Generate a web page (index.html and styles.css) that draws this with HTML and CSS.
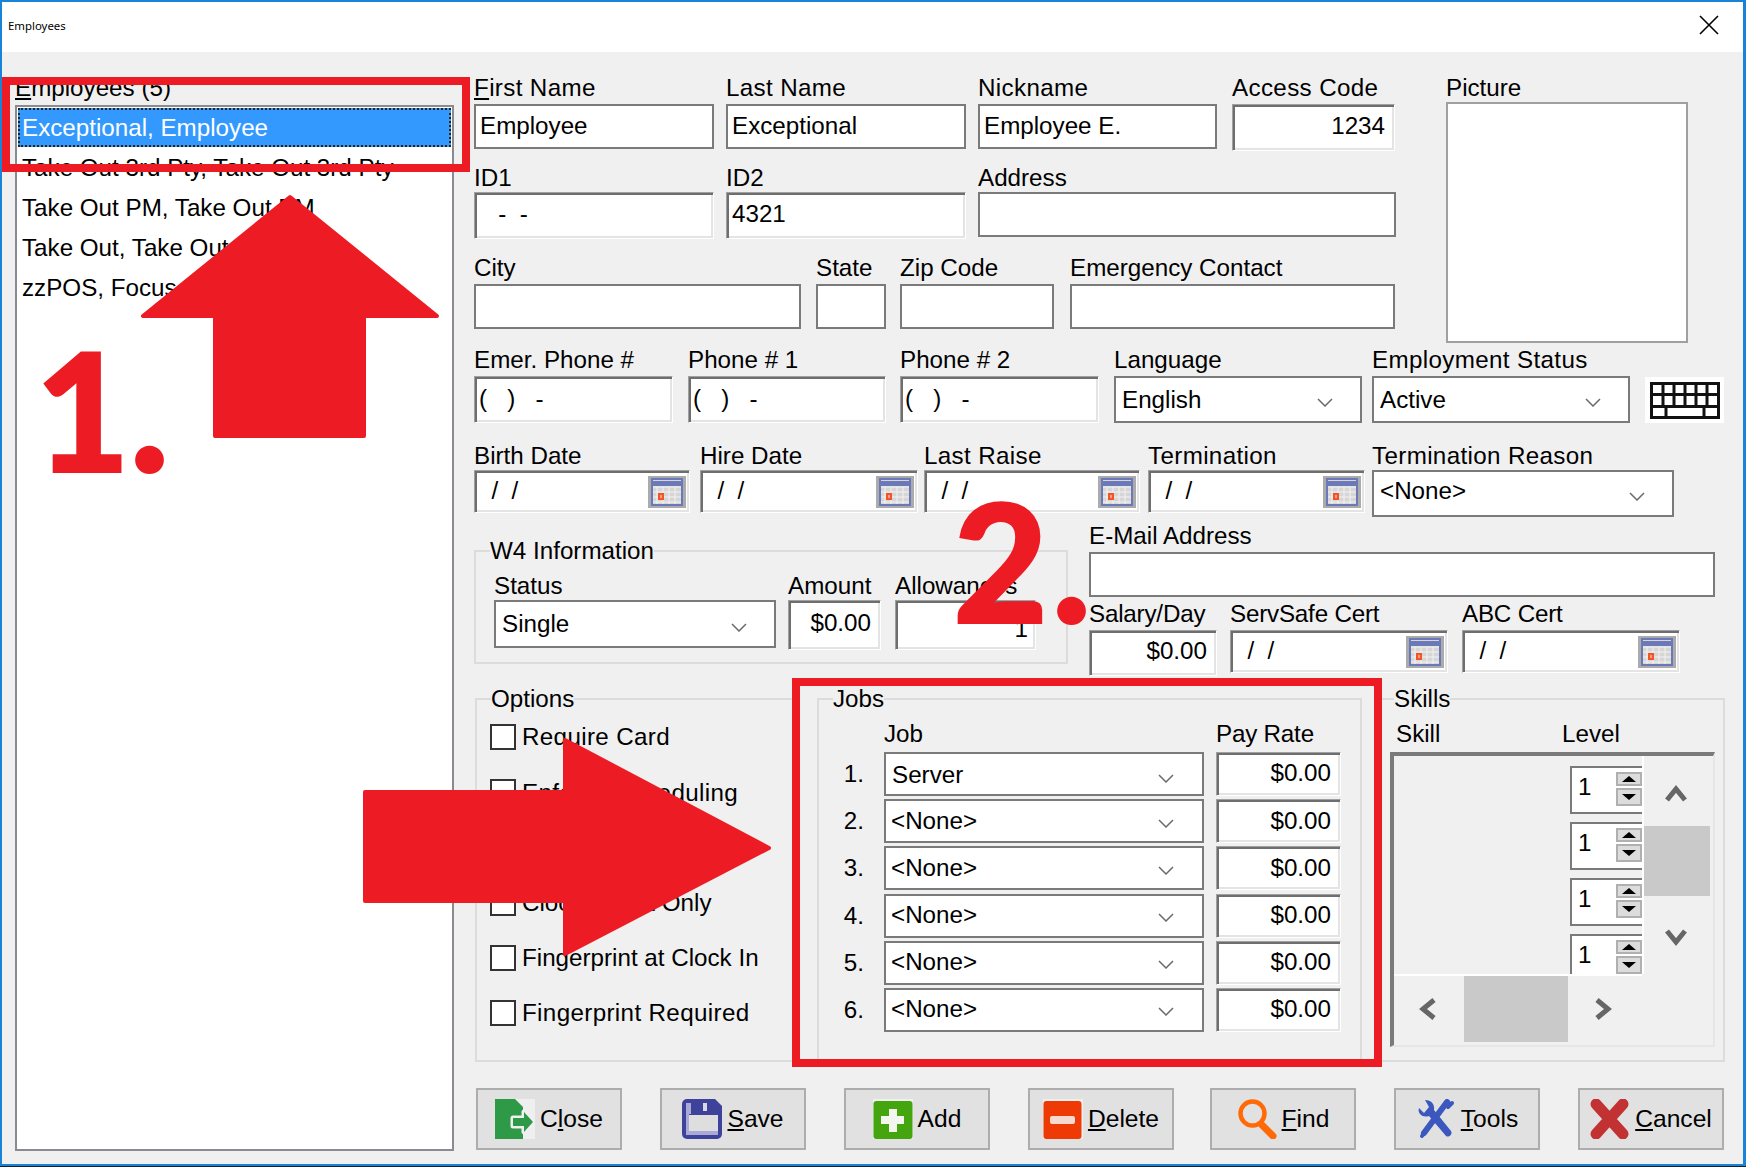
FILE: index.html
```html
<!DOCTYPE html>
<html lang="en">
<head>
<meta charset="utf-8">
<title>Employees</title>
<link rel="stylesheet" href="styles.css">
</head>
<body>
<svg class="defs" width="0" height="0" aria-hidden="true">
  <symbol id="chev" viewBox="0 0 16 9"><path d="M1 1l7 7 7-7" fill="none" stroke="#6a6a6a" stroke-width="1.5"/></symbol>
  <symbol id="cal" viewBox="0 0 38 32">
    <rect width="38" height="32" fill="#ababab"/>
    <rect x="3" y="3" width="32" height="26" fill="#d6d6d6"/>
    <path d="M3 11h32M3 16h32M3 21h32M3 26h32M9 11v18M15 11v18M21 11v18M27 11v18" stroke="#f2f2f2" stroke-width="1"/>
    <rect x="3" y="5" width="32" height="5" fill="#6b79b8"/>
    <rect x="4" y="3" width="30" height="26" fill="none" stroke="#6b79b8" stroke-width="2"/>
    <rect x="10" y="17" width="6" height="7" fill="#f0552a"/>
    <rect x="12" y="19" width="2" height="3" fill="#f8a080"/>
  </symbol>
</svg>

<div class="window">
  <header class="titlebar">
    <span class="title">Employees</span>
    <svg class="close-x" viewBox="0 0 20 20"><path d="M1 1l18 18M19 1L1 19" stroke="#000" stroke-width="1.6" fill="none"/></svg>
  </header>

  <div class="content">
    <aside class="left">
      <div class="list-label"><u>E</u>mployees (5)</div>
      <ul class="list">
        <li class="item selected">Exceptional, Employee</li>
        <li class="item">Take Out 3rd Pty, Take Out 3rd Pty</li>
        <li class="item">Take Out PM, Take Out PM</li>
        <li class="item">Take Out, Take Out</li>
        <li class="item">zzPOS, Focus</li>
      </ul>
    </aside>

    <main class="right">
      <div class="top-block">
        <div class="top-fields">
          <div class="row">
            <div class="field w240"><label class="lbl wide"><u>F</u>irst Name</label><div class="ctl flat h45">Employee</div></div>
            <div class="field w240 ml12"><label class="lbl wide">Last Name</label><div class="ctl flat h45">Exceptional</div></div>
            <div class="field w239 ml12"><label class="lbl wide">Nickname</label><div class="ctl flat h45">Employee E.</div></div>
            <div class="field w163 ml15"><label class="lbl wide">Access Code</label><div class="ctl sunken h47 num">1234</div></div>
          </div>
          <div class="row r2">
            <div class="field w240"><label class="lbl low">ID1</label><div class="ctl sunken h47 masked">   -  -</div></div>
            <div class="field w240 ml12"><label class="lbl low">ID2</label><div class="ctl sunken h47">4321</div></div>
            <div class="field w418 ml12"><label class="lbl low">Address</label><div class="ctl flat h45"></div></div>
          </div>
          <div class="row r3">
            <div class="field w327"><label class="lbl">City</label><div class="ctl flat h45"></div></div>
            <div class="field w70 ml15"><label class="lbl">State</label><div class="ctl flat h45"></div></div>
            <div class="field w154 ml14"><label class="lbl">Zip Code</label><div class="ctl flat h45"></div></div>
            <div class="field w325 ml16"><label class="lbl">Emergency Contact</label><div class="ctl flat h45"></div></div>
          </div>
        </div>
        <div class="field picture-col"><label class="lbl pic-lbl">Picture</label><div class="picture"></div></div>
      </div>

      <div class="row r4">
        <div class="field w199"><label class="lbl">Emer. Phone #</label><div class="ctl sunken h47 masked ph">(   )   -</div></div>
        <div class="field w198 ml15"><label class="lbl">Phone # 1</label><div class="ctl sunken h47 masked ph">(   )   -</div></div>
        <div class="field w199 ml14"><label class="lbl">Phone # 2</label><div class="ctl sunken h47 masked ph">(   )   -</div></div>
        <div class="field w248 ml15"><label class="lbl">Language</label><div class="ctl sel h47"><span>English</span><svg class="chev"><use href="#chev"/></svg></div></div>
        <div class="field w258 ml10"><label class="lbl wide">Employment Status</label><div class="ctl sel h47"><span>Active</span><svg class="chev"><use href="#chev"/></svg></div></div>
        <div class="field w79 ml15 kb-field">
          <div class="kb">
            <svg viewBox="0 0 70 37" class="kb-icon"><path d="M1.5 1.5h67v34h-67zM1.5 12.5h67M1.5 24.5h67M13 1.5v23M24 1.5v23M35 1.5v23M46 1.5v23M57 1.5v23M16 24.5v11M54 24.5v11" fill="none" stroke="#111" stroke-width="3"/></svg>
          </div>
        </div>
      </div>

      <div class="row r5">
        <div class="field w216"><label class="lbl low">Birth Date</label><div class="ctl sunken h43 date"><span class="masked">  /  /</span><svg class="cal"><use href="#cal"/></svg></div></div>
        <div class="field w218 ml10"><label class="lbl low">Hire Date</label><div class="ctl sunken h43 date"><span class="masked">  /  /</span><svg class="cal"><use href="#cal"/></svg></div></div>
        <div class="field w216 ml6"><label class="lbl low wide">Last Raise</label><div class="ctl sunken h43 date"><span class="masked">  /  /</span><svg class="cal"><use href="#cal"/></svg></div></div>
        <div class="field w217 ml8"><label class="lbl low wide">Termination</label><div class="ctl sunken h43 date"><span class="masked">  /  /</span><svg class="cal"><use href="#cal"/></svg></div></div>
        <div class="field w302 ml7"><label class="lbl low wide">Termination Reason</label><div class="ctl sel h47 raise"><span>&lt;None&gt;</span><svg class="chev drop"><use href="#chev"/></svg></div></div>
      </div>

      <div class="mid-block">
        <fieldset class="group w4">
          <legend>W4 Information</legend>
          <div class="row w4-row">
            <div class="field w282"><label class="lbl low">Status</label><div class="ctl sel h48"><span>Single</span><svg class="chev"><use href="#chev"/></svg></div></div>
            <div class="field w93 ml12"><label class="lbl low">Amount</label><div class="ctl sunken h50 num">$0.00</div></div>
            <div class="field w141 ml14"><label class="lbl low">Allowances</label><div class="ctl sunken h50 num allow">1</div></div>
          </div>
        </fieldset>
        <div class="mid-right">
          <div class="field"><label class="lbl">E-Mail Address</label><div class="ctl flat h45"></div></div>
          <div class="row salary-row">
            <div class="field w128"><label class="lbl tight">Salary/Day</label><div class="ctl sunken h46 num">$0.00</div></div>
            <div class="field w218 ml13"><label class="lbl tight">ServSafe Cert</label><div class="ctl sunken h43 date"><span class="masked">  /  /</span><svg class="cal"><use href="#cal"/></svg></div></div>
            <div class="field w218 ml14"><label class="lbl tight">ABC Cert</label><div class="ctl sunken h43 date"><span class="masked">  /  /</span><svg class="cal"><use href="#cal"/></svg></div></div>
          </div>
        </div>
      </div>

      <div class="lower-block">
        <fieldset class="group options">
          <legend>Options</legend>
          <div class="option-list">
            <div class="option wide"><span class="check"></span><span>Require Card</span></div>
            <div class="option wide"><span class="check"></span><span>Enforce Scheduling</span></div>
            <div class="option"><span class="check"></span></div>
            <div class="option"><span class="check"></span><span>Clock In/Out Only</span></div>
            <div class="option"><span class="check"></span><span>Fingerprint at Clock In</span></div>
            <div class="option wide"><span class="check"></span><span>Fingerprint Required</span></div>
          </div>
        </fieldset>

        <fieldset class="group jobs">
          <legend>Jobs</legend>
          <div class="jobs-head"><span class="lbl low job-h">Job</span><span class="lbl low tight">Pay Rate</span></div>
          <div class="jobs-grid">
            <span class="job-num">1.</span><div class="ctl sel job-sel job-first"><span>Server</span><svg class="chev"><use href="#chev"/></svg></div><div class="ctl sunken num job-pay">$0.00</div>
            <span class="job-num">2.</span><div class="ctl sel job-sel"><span>&lt;None&gt;</span><svg class="chev"><use href="#chev"/></svg></div><div class="ctl sunken num job-pay">$0.00</div>
            <span class="job-num">3.</span><div class="ctl sel job-sel"><span>&lt;None&gt;</span><svg class="chev"><use href="#chev"/></svg></div><div class="ctl sunken num job-pay">$0.00</div>
            <span class="job-num">4.</span><div class="ctl sel job-sel"><span>&lt;None&gt;</span><svg class="chev"><use href="#chev"/></svg></div><div class="ctl sunken num job-pay">$0.00</div>
            <span class="job-num">5.</span><div class="ctl sel job-sel"><span>&lt;None&gt;</span><svg class="chev"><use href="#chev"/></svg></div><div class="ctl sunken num job-pay">$0.00</div>
            <span class="job-num">6.</span><div class="ctl sel job-sel"><span>&lt;None&gt;</span><svg class="chev"><use href="#chev"/></svg></div><div class="ctl sunken num job-pay">$0.00</div>
          </div>
        </fieldset>

        <fieldset class="group skills">
          <legend>Skills</legend>
          <div class="skills-head"><span class="lbl low skill-h">Skill</span><span class="lbl low level-h">Level</span></div>
          <div class="skills-panel">
            <div class="spin-area">
              <div class="spin"><span>1</span><div class="spin-btns"><i class="up"></i><i class="down"></i></div></div>
              <div class="spin"><span>1</span><div class="spin-btns"><i class="up"></i><i class="down"></i></div></div>
              <div class="spin"><span>1</span><div class="spin-btns"><i class="up"></i><i class="down"></i></div></div>
              <div class="spin"><span>1</span><div class="spin-btns"><i class="up"></i><i class="down"></i></div></div>
            </div>
            <div class="vbar">
              <div class="vbar-end"><svg class="sb-v" viewBox="0 0 22 17"><path d="M2 15L11 4l9 11" fill="none" stroke="#666" stroke-width="5"/></svg></div>
              <div class="vbar-thumb"></div>
              <div class="vbar-end low-end"><svg class="sb-v" viewBox="0 0 22 17"><path d="M2 2l9 11 9-11" fill="none" stroke="#666" stroke-width="5"/></svg></div>
            </div>
            <div class="hbar">
              <div class="hbar-end"><svg class="sb-h" viewBox="0 0 17 22"><path d="M15 2L4 11l11 9" fill="none" stroke="#666" stroke-width="5"/></svg></div>
              <div class="hbar-thumb"></div>
              <div class="hbar-end"><svg class="sb-h" viewBox="0 0 17 22"><path d="M2 2l11 9-11 9" fill="none" stroke="#666" stroke-width="5"/></svg></div>
            </div>
            <div class="corner"></div>
          </div>
        </fieldset>
      </div>

      <div class="buttons">
        <button class="btn"><svg class="ico" viewBox="0 0 40 40"><rect width="40" height="40" fill="#efefef"/><path d="M0 0H20L28 8V40H0Z" fill="#2e9a48"/><path d="M18 19H29V13L38 23 29 33V27H18Z" fill="#2e9a48" stroke="#f0f0f0" stroke-width="5" stroke-linejoin="round" paint-order="stroke"/></svg><span>C<u>l</u>ose</span></button>
        <button class="btn"><svg class="ico" viewBox="0 0 40 40"><path d="M5 0H33L40 7V35A5 5 0 0 1 35 40H5A5 5 0 0 1 0 35V5A5 5 0 0 1 5 0Z" fill="#3f429a"/><path d="M4 16H36V35A1 1 0 0 1 35 36H5A1 1 0 0 1 4 35Z" fill="#dedede"/><path d="M4 4H9V15H4ZM5 32H36V36H5Z" fill="#a9aad6"/><rect x="4" y="14" width="3" height="22" fill="#a9aad6"/><rect x="21" y="4" width="4" height="8" fill="#d8d8e8"/></svg><span><u>S</u>ave</span></button>
        <button class="btn"><svg class="ico" viewBox="0 0 40 40"><rect width="40" height="40" fill="#efefef"/><rect x="0.5" y="2" width="39" height="38" rx="3" fill="#45a50e"/><path d="M16 10H24V17H31V25H24V33H16V25H8V17H16Z" fill="#f2f6ee"/></svg><span>Add</span></button>
        <button class="btn"><svg class="ico" viewBox="0 0 40 40"><rect width="40" height="40" fill="#efefef"/><rect x="0.5" y="2" width="38" height="38" rx="3" fill="#ee3b05"/><rect x="7" y="17" width="25" height="8" rx="2" fill="#f6d9cf"/></svg><span><u>D</u>elete</span></button>
        <button class="btn btn-find"><svg class="ico" viewBox="0 0 40 40"><circle cx="15.5" cy="14.5" r="12" fill="none" stroke="#ff6a06" stroke-width="4.5"/><path d="M25 26L36 37" stroke="#ff6a06" stroke-width="7" stroke-linecap="round"/></svg><span><u>F</u>ind</span></button>
        <button class="btn"><svg class="ico" viewBox="0 0 40 40"><path d="M31 3L8 34" stroke="#3c58be" stroke-width="6" stroke-linecap="round"/><path d="M36 4l-4 4M6 37l2-3" stroke="#3c58be" stroke-width="4" stroke-linecap="round"/><path d="M3 9L8 14l5-6L9 1C15 1 19 5 18 11L35 32C37 35 33 39 30 37L13 17C7 19 1 15 3 9Z" fill="#3c58be"/></svg><span><u>T</u>ools</span></button>
        <button class="btn"><svg class="ico" viewBox="0 0 40 40"><path d="M6 5L33 35M33 5L6 35" stroke="#c33232" stroke-width="11" stroke-linecap="round"/></svg><span><u>C</u>ancel</span></button>
      </div>
    </main>
  </div>
</div>

<div class="mark mark-list"></div>
<div class="mark mark-jobs"></div>
<svg class="arrows" viewBox="0 0 1746 1167" width="1746" height="1167" aria-hidden="true">
  <path d="M290 197L143 316H215V436H364V316H437Z" fill="#ed1c24" stroke="#ed1c24" stroke-width="4" stroke-linejoin="round"/>
  <path d="M365 792H565V740L769 848 565 954V901H365Z" fill="#ed1c24" stroke="#ed1c24" stroke-width="4" stroke-linejoin="round"/>
</svg>
<div class="step step-1">1.</div>
<div class="step step-2">2.</div>
</body>
</html>
```

FILE: styles.css
```css
* { box-sizing: border-box; }
html, body { margin: 0; padding: 0; background: #10202e; }
body { width: 1746px; height: 1167px; overflow: hidden; font: 24.2px/1.2 "Liberation Sans", Arial, sans-serif; color: #000; }
.defs { position: absolute; }

.window { width: 1746px; height: 1166px; background: #f0f0f0; border: solid #1883d7; border-width: 2px 3px 2px 2px; display: flex; flex-direction: column; }
.titlebar { height: 50px; background: #fff; display: flex; align-items: center; justify-content: space-between; padding: 0 24px 4px 6px; flex: none; }
.title { font: 11.4px "Noto Sans", sans-serif; }
.close-x { width: 20px; height: 20px; }

.content { flex: 1; display: flex; padding-top: 22px; min-height: 0; }

.left { width: 472px; padding-left: 13px; flex: none; }
.list-label { height: 31px; line-height: 28px; }
.list { list-style: none; margin: 0; padding: 1px; width: 439px; height: 1046px; background: #fff; border: 2px solid #8a8a93; }
.item { height: 40px; line-height: 40px; padding-left: 4px; white-space: nowrap; }
.item.selected { height: 39px; margin-bottom: 1px; line-height: 36px; padding-left: 2px; color: #fff; background: #3399ff; border: 2px dotted #2b2210; }

.right { width: 1268px; flex: none; }
.top-block { display: flex; }
.top-fields { width: 921px; }
.row { display: flex; }
.r2 { margin-top: 11px; }
.r3 { margin-top: 15px; }
.r4 { margin-top: 3px; }
.r5 { margin-top: 17px; }

.field { display: flex; flex-direction: column; flex: none; }
.lbl { display: block; height: 30px; line-height: 28px; white-space: nowrap; }
.lbl.low { line-height: 32px; }
.wide { letter-spacing: .35px; }
.tight { letter-spacing: -.2px; }

.w70 { width: 70px; } .w79 { width: 79px; } .w93 { width: 93px; } .w128 { width: 128px; } .w141 { width: 141px; } .w154 { width: 154px; }
.w163 { width: 163px; } .w198 { width: 198px; } .w199 { width: 199px; } .w216 { width: 216px; } .w217 { width: 217px; } .w218 { width: 218px; }
.w239 { width: 239px; } .w240 { width: 240px; } .w248 { width: 248px; } .w258 { width: 258px; } .w282 { width: 282px; }
.w302 { width: 302px; } .w325 { width: 325px; } .w327 { width: 327px; } .w418 { width: 418px; }
.ml6 { margin-left: 6px; } .ml7 { margin-left: 7px; } .ml8 { margin-left: 8px; } .ml10 { margin-left: 10px; } .ml12 { margin-left: 12px; } .ml13 { margin-left: 13px; }
.ml14 { margin-left: 14px; } .ml15 { margin-left: 15px; } .ml16 { margin-left: 16px; }
.h43 { height: 43px; } .h45 { height: 45px; } .h46 { height: 46px; } .h47 { height: 47px; } .h48 { height: 48px; } .h50 { height: 50px; }

.ctl { background: #fff; display: flex; align-items: center; white-space: nowrap; flex: none; }
.flat { border: 2px solid #7a7a7a; padding: 0 4px 1px; }
.sunken { border: 1px solid; border-color: #a0a0a0 #fff #fff #a0a0a0; box-shadow: inset 2px 2px 0 #6e6e6e, inset -2px -2px 0 #e4e4e4; padding: 0 5px 4px; }
.num { justify-content: flex-end; padding-right: 9px; }
.num.allow { padding: 8px 7px 0 0; }
.masked { white-space: pre; }
.ctl.masked { padding-left: 3px; }
.ctl.ph { padding-bottom: 2px; padding-left: 4px; }
.sel { border: 2px solid #7a7a7a; padding: 0 27px 0 6px; justify-content: space-between; }
.sel.raise { padding-bottom: 5px; }
.chev { width: 16px; height: 9px; flex: none; position: relative; top: 3px; }
.chev.drop { top: 5px; }
.date { justify-content: space-between; padding: 0 3px 1px 3px; }
.cal { width: 38px; height: 32px; flex: none; position: relative; top: 1px; }

.picture-col { margin-left: 51px; width: 242px; }
.pic-lbl { height: 28px; }
.picture { height: 241px; background: #fff; border: 2px solid #a0a0a0; }

.kb-field { justify-content: flex-end; height: 77px; }
.kb { height: 46px; background: #fff; display: flex; align-items: center; justify-content: center; }
.kb-icon { width: 70px; height: 37px; }

.group { margin: 0; padding: 0; border: 2px solid #dcdcdc; min-width: 0; flex: none; }
.group legend { margin-left: 14px; padding: 0; line-height: 30px; height: 30px; }

.mid-block { display: flex; height: 159px; }
.w4 { width: 594px; height: 128px; margin-top: 19px; }
.w4-row { padding: 4px 0 0 18px; }
.mid-right { width: 626px; margin: 5px 0 0 21px; }
.salary-row { margin-top: 3px; }

.lower-block { display: flex; margin-top: 8px; }
.options { width: 322px; height: 378px; margin-left: 1px; }
.option-list { display: grid; grid-auto-rows: 26px; row-gap: 29.2px; padding: 10px 0 0 13px; }
.option { display: flex; align-items: center; gap: 6px; white-space: nowrap; }
.check { width: 26px; height: 26px; background: #fff; border: 2px solid #333; flex: none; }

.jobs { width: 545px; height: 378px; margin-left: 20px; }
.jobs-head { display: flex; height: 38px; padding: 4px 0 0 65px; }
.job-h { width: 332px; }
.jobs-grid { display: grid; grid-auto-rows: 44px; row-gap: 3.2px; grid-template-columns: 65px 332px 125px; }
.job-num { text-align: right; padding-right: 20px; line-height: 44px; }
.job-sel { width: 320px; padding-right: 28px; padding-left: 5px; padding-bottom: 2px; }
.job-sel.job-first { padding-left: 6px; padding-bottom: 0; padding-top: 2px; }
.job-pay { padding-bottom: 2px; }

.skills { width: 349px; height: 378px; margin-left: 14px; }
.skills legend { margin-left: 16px; }
.skills-head { display: flex; height: 38px; padding: 4px 0 0 18px; }
.skill-h { width: 166px; }
.skills-panel { margin-left: 12px; width: 325px; height: 295px; background: #f0f0f0; border: solid; border-width: 4px 2px 2px 4px; border-color: #7a7a7a #e6e6e6 #e6e6e6 #7a7a7a; display: grid; grid-template-columns: 248px 71px; grid-template-rows: 218px 71px; }
.spin-area { overflow: hidden; padding: 10px 0 0 176px; display: flex; flex-direction: column; gap: 8px; }
.spin { width: 72px; height: 48px; flex: none; background: #fff; border: solid #7a7a7a; border-width: 2px 0 2px 2px; display: flex; padding-left: 6px; line-height: 38px; justify-content: space-between; }
.spin-btns { width: 26px; display: flex; flex-direction: column; padding-top: 4px; gap: 2px; }
.spin-btns i { display: flex; align-items: center; justify-content: center; background: #dcdcdc; border: 2px solid #b0b0b0; }
.spin-btns .up { height: 14px; }
.spin-btns .down { height: 18px; }
.up::before, .down::before { content: ""; width: 0; height: 0; border: 7px solid transparent; }
.up::before { border-top-width: 0; border-bottom: 6px solid #000; }
.down::before { border-bottom-width: 0; border-top: 6px solid #000; }
.vbar { border-left: 2px solid #fff; display: flex; flex-direction: column; }
.vbar-end { height: 70px; display: flex; align-items: center; justify-content: center; padding: 5px 5px 0 0; }
.vbar-end.low-end { height: 78px; padding-top: 5px; }
.vbar-thumb { width: 66px; height: 70px; background: #c9c9c9; flex: none; }
.sb-v { width: 22px; height: 17px; }
.sb-h { width: 17px; height: 22px; }
.hbar { border-top: 2px solid #fff; display: flex; align-items: flex-start; }
.hbar-end { width: 70px; height: 66px; display: flex; align-items: center; justify-content: center; padding-right: 3px; }
.hbar-end + .hbar-thumb + .hbar-end { width: 74px; }
.hbar-thumb { width: 104px; height: 66px; background: #c9c9c9; flex: none; }

.buttons { display: flex; gap: 38px; margin: 26px 0 0 2px; }
.btn { width: 146px; height: 62px; padding: 0; border: 2px solid #adadad; background: #e1e1e1; display: flex; align-items: center; justify-content: center; gap: 5px; font: 24.6px "Liberation Sans", Arial, sans-serif; color: #000; }
.btn-find { margin-left: -2px; }
.ico { width: 40px; height: 40px; flex: none; }

.mark { position: absolute; border: 8px solid #ed1c24; }
.mark-list { left: 2px; top: 77px; width: 468px; height: 95px; }
.mark-jobs { left: 792px; top: 678px; width: 590px; height: 389px; }
.arrows { position: absolute; left: 0; top: 0; }
.step { position: absolute; color: #ed1c24; font: 900 164px/170px Lato, sans-serif; white-space: nowrap; -webkit-text-stroke: 2px #ed1c24; }
.step-1 { left: 35px; top: 324px; }
.step-2 { left: 953px; top: 475px; letter-spacing: 4px; }
```
